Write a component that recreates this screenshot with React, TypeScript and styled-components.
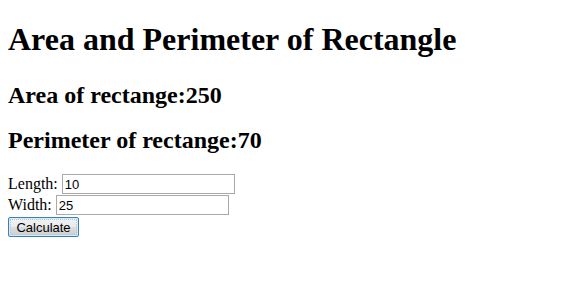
import React, { useState } from 'react';
import styled, { createGlobalStyle } from 'styled-components';

const Global = createGlobalStyle`
  body {
    margin: 8px;
    background: #ffffff;
    font-family: "Liberation Serif", "Times New Roman", serif;
    color: #000;
  }
`;

const Title = styled.h1`
  font-size: 32px;
  font-weight: bold;
  margin: 13px 0 23px;
  line-height: 37px;
`;

const Result = styled.h2`
  font-size: 24px;
  font-weight: bold;
  margin: 17px 0;
  line-height: 28px;
`;

const Form = styled.form`
  margin-top: 20px;
  font-size: 16px;
  line-height: 21px;
`;

const Row = styled.div`
  display: flex;
  align-items: flex-start;
  height: 21px;
`;

const Label = styled.label`
  margin-right: 4px;
  line-height: 20px;
`;

const Field = styled.input`
  box-sizing: border-box;
  width: 173px;
  height: 20px;
  border: 1px solid #a9a9a9;
  padding: 1px 2px;
  font-family: "Liberation Sans", Arial, sans-serif;
  font-size: 13px;
  color: #000;
  outline: none;
`;

const Button = styled.button`
  box-sizing: border-box;
  width: 71px;
  height: 20px;
  margin-top: 1px;
  padding: 0;
  border: 1px solid #3c7fb1;
  border-radius: 2px;
  background: linear-gradient(#f2f2f2 0%, #ebebeb 50%, #dddddd 51%, #cfcfcf 100%);
  box-shadow: inset 0 0 0 1px #d8ecf8;
  outline: 1px dotted #9ccdf0;
  outline-offset: -3px;
  font-family: "Liberation Sans", Arial, sans-serif;
  font-size: 13px;
  color: #000;
`;

export default function App() {
  const [length, setLength] = useState('10');
  const [width, setWidth] = useState('25');
  const l = Number(length) || 0;
  const w = Number(width) || 0;

  return (
    <>
      <Global />
      <Title>Area and Perimeter of Rectangle</Title>
      <Result>Area of rectange:{l * w}</Result>
      <Result>Perimeter of rectange:{2 * (l + w)}</Result>
      <Form onSubmit={(e) => e.preventDefault()}>
        <Row>
          <Label>Length:</Label>
          <Field value={length} onChange={(e) => setLength(e.target.value)} />
        </Row>
        <Row>
          <Label>Width:</Label>
          <Field value={width} onChange={(e) => setWidth(e.target.value)} />
        </Row>
        <Row>
          <Button type="submit">Calculate</Button>
        </Row>
      </Form>
    </>
  );
}
